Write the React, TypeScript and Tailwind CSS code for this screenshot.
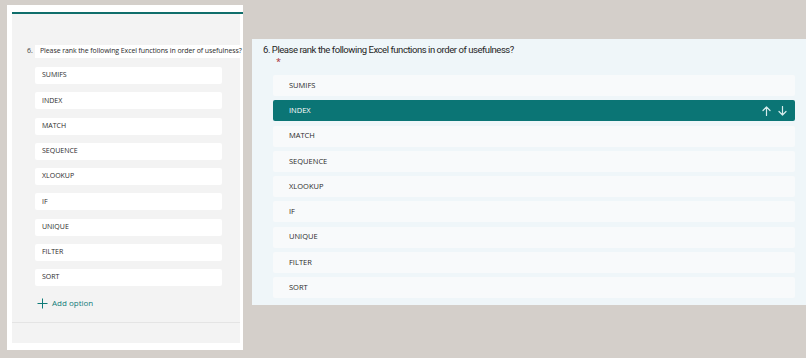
import React from "react";

const OPTIONS = ["SUMIFS", "INDEX", "MATCH", "SEQUENCE", "XLOOKUP", "IF", "UNIQUE", "FILTER", "SORT"];

const QUESTION = "Please rank the following Excel functions in order of usefulness?";

function ArrowUp() {
  return (
    <svg width="9" height="10" viewBox="0 0 9 10" fill="none" stroke="currentColor" strokeWidth="1.2" strokeLinecap="round" strokeLinejoin="round">
      <path d="M4.5 9.5V1M1 4.5l3.5-3.5L8 4.5" />
    </svg>
  );
}

function ArrowDown() {
  return (
    <svg width="9" height="10" viewBox="0 0 9 10" fill="none" stroke="currentColor" strokeWidth="1.2" strokeLinecap="round" strokeLinejoin="round">
      <path d="M4.5 0.5V9M1 5.5l3.5 3.5L8 5.5" />
    </svg>
  );
}

function EditorPanel() {
  return (
    <div className="ml-[7px] mt-[5px] w-[236px] h-[345px] bg-white pl-[5px] pt-[7px] shrink-0">
      <div className="h-[2px] bg-[#0f6e6b]" />
      <div className="w-[228px] h-[329px] bg-[#f3f3f3] flex flex-col">
        <div className="mt-[31px] flex items-center h-[13px]">
          <span className="w-[23px] shrink-0 pl-[15px] text-[7px] text-[#444]">6.</span>
          <div className="flex-1 min-w-0 mr-[-3px] h-[13px] bg-white flex items-center pl-[5px] text-[7px] tracking-[-0.1px] text-[#2b2b2b] whitespace-nowrap overflow-hidden">
            {QUESTION}
          </div>
        </div>
        <div className="mt-[9px] ml-[23px] w-[187px] flex flex-col gap-[8.25px]">
          {OPTIONS.map(o => (
            <div key={o} className="h-[17px] bg-white rounded-[2px] flex items-center pl-[7px] text-[7px] text-[#2b2b2b]">
              {o}
            </div>
          ))}
        </div>
        <div className="mt-[11px] ml-[25px] flex items-center gap-[4px] text-[#0f7b78]">
          <svg width="11" height="11" viewBox="0 0 11 11" stroke="currentColor" strokeWidth="1" fill="none">
            <path d="M5.5 0.5v10M0.5 5.5h10" />
          </svg>
          <span className="text-[8px]">Add option</span>
        </div>
        <div className="mt-[13px] h-px bg-[#e4e4e4]" />
      </div>
    </div>
  );
}

function PreviewPanel() {
  return (
    <div className="ml-[9px] mt-[39px] w-[554px] h-[266px] bg-[#eff6f9] shrink-0 flex flex-col">
      <div
        className="pl-[11px] pt-[5px] text-[9.5px] tracking-[-0.45px] leading-[12px] text-[#1f1f1f] whitespace-nowrap"
        style={{ fontFamily: 'Roboto, "Open Sans", sans-serif' }}
      >
        6. {QUESTION}
      </div>
      <div className="pl-[24px] mt-[2px] text-[9px] leading-[7px] text-[#a4262c]">*</div>
      <div className="mt-[10px] ml-[21px] w-[522px] flex flex-col gap-[4.25px]">
        {OPTIONS.map(o =>
          o === "INDEX" ? (
            <div key={o} className="h-[21px] bg-[#0b7575] rounded-[2px] flex items-center pl-[16px] pr-[8px] text-[7.5px] text-white">
              <span className="flex-1">{o}</span>
              <span className="flex items-center gap-[7px] text-[#d8ecec]">
                <ArrowUp />
                <ArrowDown />
              </span>
            </div>
          ) : (
            <div key={o} className="h-[21px] bg-[#f8fafb] rounded-[2px] flex items-center pl-[16px] text-[7.5px] text-[#2b2b2b]">
              {o}
            </div>
          ),
        )}
      </div>
    </div>
  );
}

export default function App() {
  return (
    <div
      className="w-[806px] h-[358px] bg-[#d4cfca] flex items-start overflow-hidden"
      style={{ fontFamily: '"Open Sans", "Noto Sans", sans-serif' }}
    >
      <EditorPanel />
      <PreviewPanel />
    </div>
  );
}
